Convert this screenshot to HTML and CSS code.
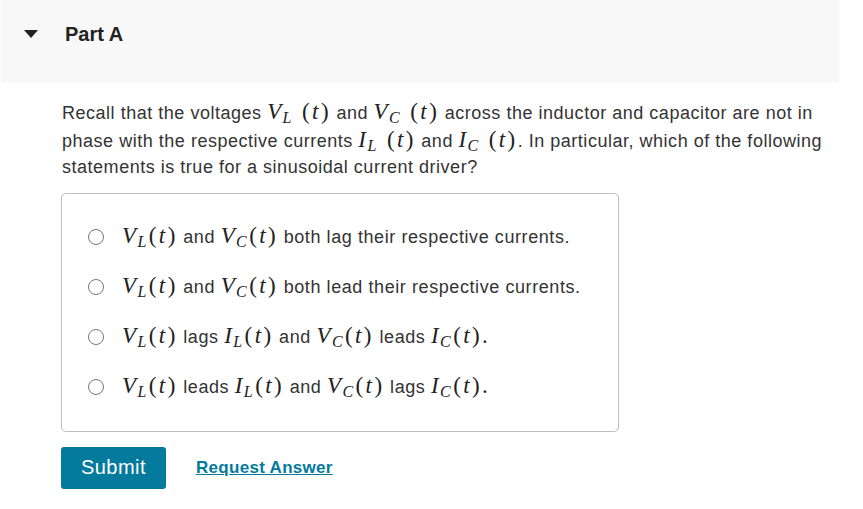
FILE: index.html
```html
<!DOCTYPE html>
<html>
<head>
<meta charset="utf-8">
<link rel="stylesheet" href="styles.css">
</head>
<body>
<div class="header">
  <span class="caret"></span>
  <span class="title">Part A</span>
</div>
<div class="content">
  <p class="question">Recall that the voltages <span class="m"><i>V</i><sub>L</sub> <span class="r">(</span><i>t</i><span class="r">)</span></span> and <span class="m"><i>V</i><sub>C</sub> <span class="r">(</span><i>t</i><span class="r">)</span></span> across the inductor and capacitor are not in phase with the respective currents <span class="m"><i>I</i><sub>L</sub> <span class="r">(</span><i>t</i><span class="r">)</span></span> and <span class="m"><i>I</i><sub>C</sub> <span class="r">(</span><i>t</i><span class="r">)</span></span>. In particular, which of the following statements is true for a sinusoidal current driver?</p>
  <div class="options">
    <label class="opt"><span class="radio"></span><span><span class="m"><i>V</i><sub>L</sub><span class="r">(</span><i>t</i><span class="r">)</span></span> and <span class="m"><i>V</i><sub>C</sub><span class="r">(</span><i>t</i><span class="r">)</span></span> both lag their respective currents.</span></label>
    <label class="opt"><span class="radio"></span><span><span class="m"><i>V</i><sub>L</sub><span class="r">(</span><i>t</i><span class="r">)</span></span> and <span class="m"><i>V</i><sub>C</sub><span class="r">(</span><i>t</i><span class="r">)</span></span> both lead their respective currents.</span></label>
    <label class="opt"><span class="radio"></span><span><span class="m"><i>V</i><sub>L</sub><span class="r">(</span><i>t</i><span class="r">)</span></span> lags <span class="m"><i>I</i><sub>L</sub><span class="r">(</span><i>t</i><span class="r">)</span></span> and <span class="m"><i>V</i><sub>C</sub><span class="r">(</span><i>t</i><span class="r">)</span></span> leads <span class="m"><i>I</i><sub>C</sub><span class="r">(</span><i>t</i><span class="r">).</span></span></span></label>
    <label class="opt"><span class="radio"></span><span><span class="m"><i>V</i><sub>L</sub><span class="r">(</span><i>t</i><span class="r">)</span></span> leads <span class="m"><i>I</i><sub>L</sub><span class="r">(</span><i>t</i><span class="r">)</span></span> and <span class="m"><i>V</i><sub>C</sub><span class="r">(</span><i>t</i><span class="r">)</span></span> lags <span class="m"><i>I</i><sub>C</sub><span class="r">(</span><i>t</i><span class="r">).</span></span></span></label>
  </div>
  <div class="actions">
    <button class="submit">Submit</button>
    <a class="request" href="#">Request Answer</a>
  </div>
</div>
</body>
</html>
```
FILE: styles.css
```css
* { box-sizing: border-box; }
body {
  margin: 0;
  font-family: "Liberation Sans", Arial, sans-serif;
  color: #333;
  background: #fff;
  width: 863px;
}
.header {
  margin-left: 1px;
  width: 838px;
  height: 83px;
  background: #f8f8f8;
  display: flex;
  align-items: flex-start;
  padding-top: 23px;
}
.caret {
  width: 0;
  height: 0;
  border-left: 7px solid transparent;
  border-right: 7px solid transparent;
  border-top: 8px solid #222;
  margin-left: 23px;
  margin-top: 7px;
}
.title {
  margin-left: 27px;
  font-weight: bold;
  font-size: 20px;
  color: #222;
  line-height: 22px;
}
.content {
  padding-left: 61px;
}
.question {
  margin: 16px 0 0 1px;
  width: 772px;
  font-size: 18px;
  letter-spacing: 0.52px;
  line-height: 26.5px;
}
.m {
  font-family: "Liberation Serif", "Times New Roman", serif;
  font-size: 23px;
  letter-spacing: 2.4px;
  white-space: nowrap;
  color: #222;
}
.m i { font-style: italic; }
.m sub {
  font-style: italic;
  font-size: 16px;
  vertical-align: -4px;
  line-height: 0;
  margin-left: -1px;
}
.r { font-style: normal; }
.options {
  margin-top: 12px;
  width: 558px;
  height: 239px;
  border: 1px solid #bdbdbd;
  border-radius: 5px;
  padding: 29px 0 0 23px;
  display: flex;
  flex-direction: column;
  gap: 22px;
}
.opt {
  display: flex;
  align-items: center;
  font-size: 18px;
  letter-spacing: 0.58px;
  line-height: 28px;
  height: 28px;
}
.radio {
  width: 16px;
  height: 16px;
  border: 1.5px solid #767676;
  border-radius: 50%;
  margin-right: 18px;
  flex: none;
  margin-left: 3px;
}
.actions {
  margin-top: 15px;
  display: flex;
  align-items: center;
}
.submit {
  width: 105px;
  height: 42px;
  background: #047a9c;
  color: #fff;
  border: none;
  border-radius: 3px;
  font-family: "Liberation Sans", Arial, sans-serif;
  font-size: 20px;
  letter-spacing: 0.5px;
  padding: 0;
}
.request {
  margin-left: 30px;
  font-size: 17px;
  letter-spacing: 0.3px;
  font-weight: bold;
  color: #047a9c;
  text-decoration: underline;
}
```
